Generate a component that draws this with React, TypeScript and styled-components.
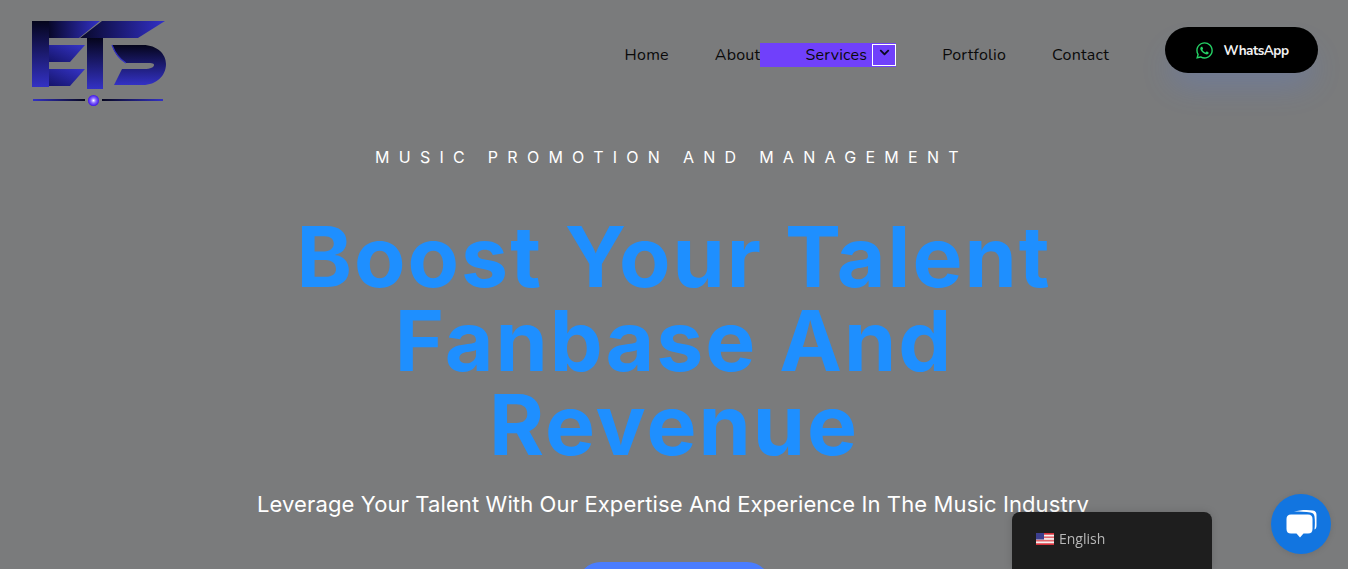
import { FaChevronDown, FaWhatsapp } from "react-icons/fa"
import styled, { createGlobalStyle } from "styled-components"

const navLinks = ["Home", "About", "Services", "Portfolio", "Contact"]

function Logo() {
    return (
        <LogoSvg viewBox="0 0 134 86" aria-label="ETS">
            <defs>
                <linearGradient id="fadeDown" x1="0" y1="0" x2="0" y2="1">
                    <stop offset="0" stopColor="#05051c" />
                    <stop offset="1" stopColor="#3331c4" />
                </linearGradient>
                <linearGradient id="fadeRight" x1="0" y1="0" x2="1" y2="0">
                    <stop offset="0" stopColor="#08082a" />
                    <stop offset="1" stopColor="#3230c8" />
                </linearGradient>
                <linearGradient id="fadeUp" x1="0" y1="1" x2="1" y2="0">
                    <stop offset="0" stopColor="#15146a" />
                    <stop offset="1" stopColor="#3534c8" />
                </linearGradient>
                <linearGradient id="lineLeft" x1="0" y1="0" x2="1" y2="0">
                    <stop offset="0" stopColor="#3331c4" />
                    <stop offset="1" stopColor="#07071f" />
                </linearGradient>
                <linearGradient id="lineRight" x1="0" y1="0" x2="1" y2="0">
                    <stop offset="0" stopColor="#07071f" />
                    <stop offset="1" stopColor="#3331c4" />
                </linearGradient>
                <radialGradient id="glow">
                    <stop offset="0" stopColor="#ffffff" />
                    <stop offset="0.45" stopColor="#8a6cff" />
                    <stop offset="1" stopColor="#3d12e8" />
                </radialGradient>
            </defs>
            {/* E */}
            <polygon points="0,0 17,0 17,66 0,66" fill="url(#fadeDown)" />
            <polygon points="17,0 68,0 47,17 17,17" fill="url(#fadeRight)" />
            <polygon points="17,24 53,24 38,41 17,41" fill="url(#fadeUp)" />
            <polygon points="17,48 53,48 38,65 17,65" fill="url(#fadeUp)" />
            {/* T */}
            <polygon points="70,0 133,0 106,17 71,17 48,17" fill="url(#fadeRight)" />
            <polygon points="55,17 71,17 71,68 55,68" fill="url(#fadeDown)" />
            {/* S */}
            <path d="M80 24H111C125 24 134 33 134 43C134 55 124 64 111 64H82L90 48H112C119 48 122 46 122 44C122 42 119 42 112 42H94C87 38 82 31 80 24Z" fill="url(#fadeDown)" />
            <path d="M80 24C83 32 87 38 94 42" stroke="#3331c4" strokeWidth="1.2" fill="none" />
            <rect x="1" y="78" width="52" height="2" fill="url(#lineLeft)" />
            <rect x="70" y="78" width="61" height="2" fill="url(#lineRight)" />
            <circle cx="61.500" cy="79.500" r="5.500" fill="url(#glow)" />
        </LogoSvg>
    )
}

function ChatIcon() {
    return (
        <svg width="34" height="34" viewBox="0 0 34 34" aria-hidden="true">
            <path d="M10 4.500C16 2.800 24 2.500 29 3.500C31.500 4 32.500 5.500 32.500 8V18C32.500 20.500 32 22 30.500 22.500C31 18 31 13 30.500 9.500C30.200 7 29 6 26.500 5.500C22 4.800 15 4.700 10 4.500Z" fill="#fff" />
            <path d="M7 7.500H24C27 7.500 28.500 9 28.500 12V22C28.500 25 27 26.500 24 26.500H19.500L16 30.500L12.500 26.500H7C4 26.500 2.500 25 2.500 22V12C2.500 9 4 7.500 7 7.500Z" fill="#fff" />
        </svg>
    )
}

function UsFlag() {
    return (
        <svg width="18" height="12" viewBox="0 0 18 12" aria-hidden="true">
            <rect width="18" height="12" fill="#f4f1f1" />
            <rect y="0" width="18" height="1.700" fill="#d8333c" />
            <rect y="3.400" width="18" height="1.700" fill="#e2666c" />
            <rect y="6.800" width="18" height="1.700" fill="#e2666c" />
            <rect y="10.300" width="18" height="1.700" fill="#d8333c" />
            <rect width="8" height="6.500" fill="#3c3f8f" />
        </svg>
    )
}

export default function App() {
    return (
        <Page>
            <GlobalStyle />
            <Header>
                <Logo />
                <Nav>
                    {navLinks.map(link =>
                        link === "Services" ? (
                            <ServicesItem key={link}>
                                {link}
                                <ChevronBox><FaChevronDown /></ChevronBox>
                            </ServicesItem>
                        ) : (
                            <NavItem key={link} $tight={link === "About" || link === "Contact"}>{link}</NavItem>
                        )
                    )}
                </Nav>
                <WhatsappButton>
                    <FaWhatsapp />
                    WhatsApp
                </WhatsappButton>
            </Header>

            <Hero>
                <Eyebrow>Music Promotion And Management</Eyebrow>
                <Title>Boost Your Talent Fanbase And Revenue</Title>
                <Subtitle>Leverage Your Talent With Our Expertise And Experience In The Music Industry</Subtitle>
                <CtaButton />
            </Hero>

            <LanguagePanel>
                <UsFlag />
                English
            </LanguagePanel>
            <ChatBubble>
                <ChatIcon />
            </ChatBubble>
        </Page>
    )
}


const GlobalStyle = createGlobalStyle`
    html, body {
        margin: 0;
        height: 100%;
        overflow: hidden;
        background: #7a7b7c;
    }
`

const Page = styled.div`
    height: 569px;
    overflow: hidden;
    background: #7a7b7c;
    font-family: "Inter", "Liberation Sans", sans-serif;
`

const Header = styled.header`
    display: flex;
    align-items: flex-start;
    height: 145px;
    box-sizing: border-box;
    padding: 21px 30px 0 32px;
`

const LogoSvg = styled.svg`
    width: 134px;
    height: 86px;
    flex: none;
`

const Nav = styled.nav`
    display: flex;
    align-items: center;
    margin: 22px 0 0 auto;
    font-family: "Nunito", "Lato", sans-serif;
    font-size: 16px;
    letter-spacing: 0.23px;
    color: #0a0a0a;
`

const NavItem = styled.a<{ $tight?: boolean }>`
    margin-right: ${({ $tight }) => ($tight ? "0" : "46px")};
    line-height: 24px;
`

const ServicesItem = styled.a`
    display: flex;
    align-items: center;
    gap: 5px;
    height: 24px;
    margin-right: 46px;
    padding-left: 45px;
    background: #7040fb;
`

const ChevronBox = styled.span`
    display: flex;
    justify-content: center;
    width: 24px;
    height: 22px;
    box-sizing: border-box;
    padding-top: 2px;
    border: 1px solid #fff;
    font-size: 11px;
    color: #0a0a20;
`

const WhatsappButton = styled.a`
    display: flex;
    align-items: center;
    justify-content: center;
    gap: 10px;
    flex: none;
    width: 153px;
    height: 46px;
    margin: 6px 0 0 56px;
    border-radius: 23px;
    background: #000;
    box-shadow: 0 18px 30px -4px rgba(74, 125, 255, 0.2);
    font-family: "Nunito", "Lato", sans-serif;
    font-size: 13.500px;
    font-weight: 700;
    letter-spacing: -0.5px;
    color: #f2f2f2;

    svg {
        width: 19px;
        height: 19px;
        color: #25d366;
    }
`

const Hero = styled.main`
    display: flex;
    flex-direction: column;
    align-items: center;
    text-align: center;
`

const Eyebrow = styled.p`
    margin: 0;
    padding-right: 5px;
    font-size: 16px;
    line-height: 24px;
    letter-spacing: 9.270px;
    text-transform: uppercase;
    color: #fff;
`

const Title = styled.h1`
    width: 800px;
    margin: 46px 0 0;
    font-size: 84px;
    font-weight: 700;
    line-height: 84px;
    letter-spacing: 2px;
    color: #1e8fff;
`

const Subtitle = styled.p`
    margin: 20px 0 0;
    padding-right: 2px;
    font-size: 22px;
    line-height: 34px;
    letter-spacing: 0.120px;
    white-space: nowrap;
    color: #fff;
`

const CtaButton = styled.div`
    width: 194px;
    height: 48px;
    margin-top: 41px;
    border-radius: 25px;
    background: #4a7dff;
`

const LanguagePanel = styled.div`
    position: fixed;
    left: 1012px;
    top: 512px;
    display: flex;
    align-items: center;
    gap: 5px;
    box-sizing: border-box;
    width: 200px;
    height: 57px;
    padding: 0 0 4px 24px;
    border-radius: 8px 8px 0 0;
    background: #1e1e1e;
    box-shadow: 0 0 8px rgba(0, 0, 0, 0.15);
    font-family: "Open Sans", sans-serif;
    font-size: 14px;
    color: #b8b8b8;
`

const ChatBubble = styled.div`
    position: fixed;
    left: 1271px;
    top: 494px;
    display: flex;
    align-items: center;
    justify-content: center;
    width: 60px;
    height: 60px;
    border-radius: 50%;
    background: #1275e0;
    box-shadow: 0 1px 6px rgba(0, 0, 0, 0.1);
`
